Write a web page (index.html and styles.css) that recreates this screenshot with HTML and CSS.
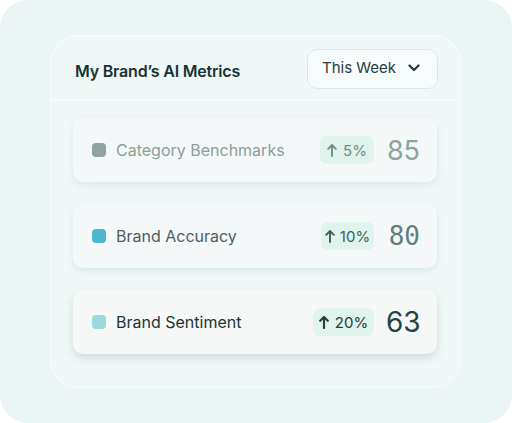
FILE: index.html
```html
<!DOCTYPE html>
<html>
<head>
<meta charset="utf-8">
<link rel="stylesheet" href="styles.css">
</head>
<body>
<div class="frame">
  <div class="card">
    <div class="card-head">
      <h1 class="title">My Brand’s AI Metrics</h1>
      <button class="dropdown">
        <span>This Week</span>
        <svg class="chev" width="12" height="8" viewBox="0 0 12 8"><path d="M1.5 1.5 L6 6 L10.5 1.5" fill="none" stroke="#1f3a3a" stroke-width="2.2" stroke-linecap="round" stroke-linejoin="round"/></svg>
      </button>
    </div>
    <div class="card-body">
      <div class="row row-faded">
        <span class="swatch sw-grey"></span>
        <span class="label">Category Benchmarks</span>
        <span class="badge b1"><svg class="arrow" width="10" height="14" viewBox="0 0 10 14"><path d="M5 13 V2 M1.2 5.8 L5 2 L8.8 5.8" fill="none" stroke="currentColor" stroke-width="1.9" stroke-linecap="round" stroke-linejoin="round"/></svg>5%</span>
        <span class="value">85</span>
      </div>
      <div class="row row-mid">
        <span class="swatch sw-blue"></span>
        <span class="label">Brand Accuracy</span>
        <span class="badge b2"><svg class="arrow" width="10" height="14" viewBox="0 0 10 14"><path d="M5 13 V2 M1.2 5.8 L5 2 L8.8 5.8" fill="none" stroke="currentColor" stroke-width="1.9" stroke-linecap="round" stroke-linejoin="round"/></svg>10%</span>
        <span class="value mono">80</span>
      </div>
      <div class="row row-main">
        <span class="swatch sw-aqua"></span>
        <span class="label">Brand Sentiment</span>
        <span class="badge b3"><svg class="arrow" width="10" height="14" viewBox="0 0 10 14"><path d="M5 13 V2 M1.2 5.8 L5 2 L8.8 5.8" fill="none" stroke="currentColor" stroke-width="2.1" stroke-linecap="round" stroke-linejoin="round"/></svg>20%</span>
        <span class="value big">63</span>
      </div>
    </div>
  </div>
</div>
</body>
</html>
```

FILE: styles.css
```css
* { box-sizing: border-box; }
html, body { margin: 0; padding: 0; background: #ffffff; }
body { font-family: Inter, "Liberation Sans", sans-serif; }

.frame {
  width: 512px;
  height: 423px;
  border-radius: 28px;
  background: #ebf5f5;
  padding: 35px 51px 0 50px;
}

.card {
  width: 411px;
  height: 353px;
  border-radius: 28px;
  background: #f0f7f7;
  border: 1.5px solid #fbfdfd;
  overflow: hidden;
}

.card-head {
  height: 65px;
  display: flex;
  align-items: center;
  justify-content: space-between;
  padding: 0 22px 0 24px;
  border-bottom: 1px solid #fbfefe;
}

.title {
  margin: 6px 0 0 0;
  font-size: 16px;
  font-weight: 600;
  color: #153434;
  letter-spacing: -0.2px;
}

.dropdown {
  width: 131px;
  height: 40px;
  margin-top: 1px;
  border: 1px solid #dbe7e7;
  border-radius: 10px;
  background: #f8fbfb;
  display: flex;
  align-items: center;
  justify-content: space-between;
  padding: 0 17px 0 14px;
  font-family: Inter, "Liberation Sans", sans-serif;
  font-size: 15px;
  color: #253d3d;
}
.dropdown span { margin-top: -2px; }
.chev { margin-top: -1px; }

.card-body {
  display: flex;
  flex-direction: column;
  gap: 22px;
  padding: 17px 23px 0 22px;
}

.row {
  height: 64px;
  border-radius: 10px;
  background: #f4f8f8;
  display: flex;
  align-items: center;
  padding: 0 17px 0 19px;
  box-shadow: 0 3px 7px rgba(120, 150, 150, 0.16);
}
.row-main { background: #f6f8f8; box-shadow: 0 4px 8px rgba(110, 140, 140, 0.24); }

.swatch {
  width: 14px;
  height: 14px;
  border-radius: 4px;
  flex: none;
}
.sw-grey { background: #8fa4a2; }
.sw-blue { background: #50b6cc; }
.sw-aqua { background: #9dd8dd; }

.label {
  margin-left: 10px;
  font-size: 16px;
  flex: 1;
}

.badge {
  height: 28px;
  border-radius: 7px;
  background: #e0f3ed;
  display: flex;
  align-items: center;
  justify-content: center;
  gap: 6px;
  font-size: 15px;
  flex: none;
}
.b1 { width: 54px; }
.b2 { width: 53px; gap: 5px; }
.b3 { width: 61px; }
.arrow { flex: none; }

.value {
  margin-left: 12px;
  font-size: 27px;
  font-weight: 400;
  width: 34px;
  text-align: right;
}
.mono { font-family: "DejaVu Sans Mono", monospace; font-size: 26px; }
.big { font-size: 28px; }

.row-faded .label { color: #8d9d9b; }
.row-faded .badge { color: #6f8e87; }
.row-faded .value { color: #8ea4a1; }

.row-mid .label { color: #4c6160; }
.row-mid .badge { color: #3e5e59; }
.row-mid .value { color: #5e7f7b; }

.row-main .label { color: #1b3535; }
.row-main .badge { color: #1f3d3a; }
.row-main .value { color: #224444; }
```
